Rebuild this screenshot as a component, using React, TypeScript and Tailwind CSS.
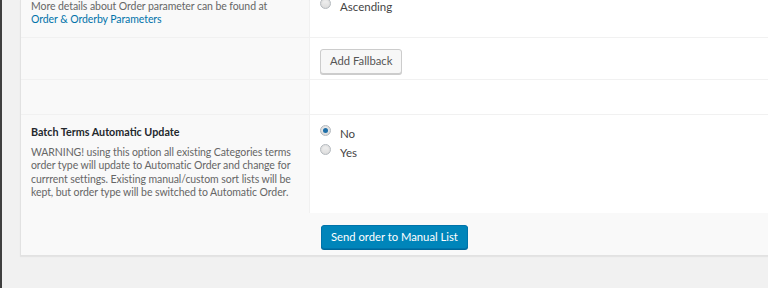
import React from "react";

const font = { fontFamily: 'Lato, "Open Sans", Arial, sans-serif' };

const Radio = ({ checked }: { checked?: boolean }) => (
    <span className="flex items-center justify-center w-[11px] h-[11px] rounded-full border border-[#b4b9be] bg-[linear-gradient(#f5f5f5,#dcdcdc)] shadow-[inset_0_1px_2px_rgba(0,0,0,0.1)] shrink-0">
        {checked ? <span className="w-[5px] h-[5px] rounded-full bg-[#1e6fa8]" /> : null}
    </span>
);

const Option = ({ label, checked }: { label: string, checked?: boolean }) => (
    <label className="flex items-start gap-[9px] h-[19px] text-[11.5px] leading-[13px] text-[#444]">
        <span className="mt-[1px]"><Radio checked={checked} /></span>
        <span className="mt-[3px]">{label}</span>
    </label>
);

export default function App() {
    return (
        <div style={font} className="flex w-[768px] h-[288px] overflow-hidden bg-[#f1f1f1]">
            {/* admin menu edge */}
            <div className="w-[2px] shrink-0 bg-[#3f3f3f]" />

            <div className="flex-1 pl-[18px]">
                <div className="w-[760px] bg-white border-l border-b border-[#e2e2e2] shadow-[0_1px_1px_rgba(0,0,0,0.05)]">
                    {/* Order parameter (cut off) */}
                    <div className="flex h-[38px] border-b border-[#f1f1f1]">
                        <div className="w-[289px] shrink-0 bg-[#f9f9f9] border-r border-[#f1f1f1] pl-[10px] overflow-hidden">
                            <p className="text-[10.5px] leading-[12.5px] tracking-[-0.08px] text-[#666] whitespace-nowrap">
                                More details about Order parameter can be found at
                                <br />
                                <a className="text-[#0073aa]">Order &amp; Orderby Parameters</a>
                            </p>
                        </div>
                        <div className="flex-1 pl-[10px] -mt-[3px]">
                            <Option label="Ascending" />
                        </div>
                    </div>

                    {/* Fallback */}
                    <div className="flex h-[42px] border-b border-[#f1f1f1]">
                        <div className="w-[289px] shrink-0 bg-[#f9f9f9] border-r border-[#f1f1f1]" />
                        <div className="flex-1 pl-[10px] pt-[9px]">
                            <button className="h-[25px] px-[9px] rounded-[3px] border border-[#cccccc] bg-[#f7f7f7] shadow-[0_1px_0_#cccccc] text-[11.25px] text-[#555]">
                                Add Fallback
                            </button>
                        </div>
                    </div>

                    {/* empty row */}
                    <div className="flex h-[35px] border-b border-[#f1f1f1]">
                        <div className="w-[289px] shrink-0 bg-[#f9f9f9] border-r border-[#f1f1f1]" />
                        <div className="flex-1" />
                    </div>

                    {/* Batch terms */}
                    <div className="flex h-[98px]">
                        <div className="w-[289px] shrink-0 bg-[#f9f9f9] border-r border-[#f1f1f1] pl-[10px] pt-[10px] overflow-hidden">
                            <h4 className="text-[10.75px] leading-[13px] font-bold text-[#23282d] whitespace-nowrap">Batch Terms Automatic Update</h4>
                            <p className="mt-[8px] text-[10.5px] leading-[13.3px] tracking-[-0.08px] text-[#666] whitespace-nowrap">
                                WARNING! using this option all existing Categories terms
                                <br />
                                order type will update to Automatic Order and change for
                                <br />
                                currrent settings. Existing manual/custom sort lists will be
                                <br />
                                kept, but order type will be switched to Automatic Order.
                            </p>
                        </div>
                        <div className="flex-1 pl-[10px] pt-[9px]">
                            <Option label="No" checked />
                            <Option label="Yes" />
                        </div>
                    </div>

                    {/* footer */}
                    <div className="h-[42px] bg-[#f9f9f9] pl-[300px] pt-[10px]">
                        <button className="h-[24px] px-[9px] rounded-[3px] border border-[#0073aa] bg-[#0085ba] shadow-[0_1px_0_#006799] text-[11.25px] text-white">
                            Send order to Manual List
                        </button>
                    </div>
                </div>
            </div>
        </div>
    );
}
